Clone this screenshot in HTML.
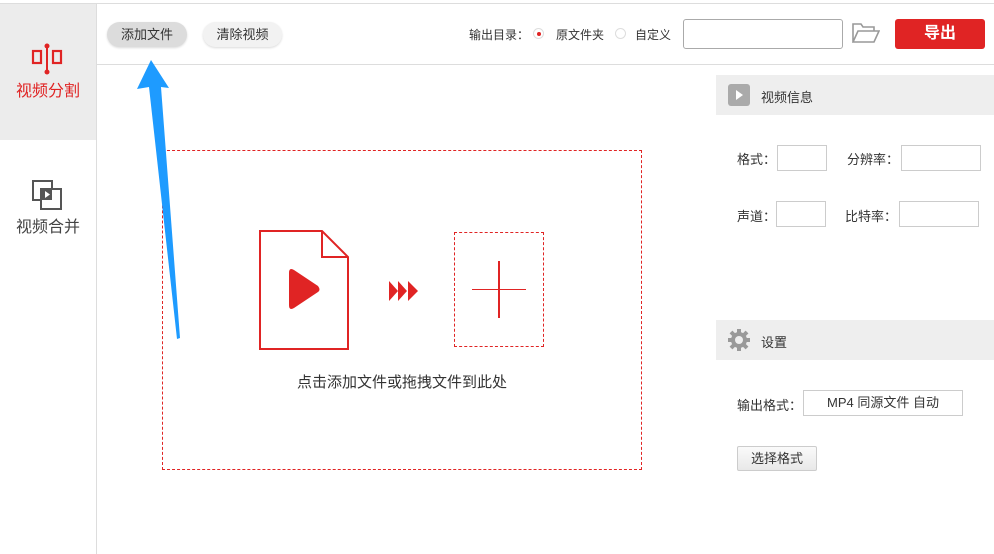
<!DOCTYPE html>
<html><head><meta charset="utf-8"><style>
*{margin:0;padding:0;box-sizing:border-box}
body{width:994px;height:554px;position:relative;background:#fff;font-family:"Liberation Sans","Noto Sans CJK SC",sans-serif;font-size:13px;color:#333;overflow:hidden}
.a{position:absolute}
.btn{position:absolute;top:22px;height:25px;border-radius:13px;font-size:13px;line-height:25px;text-align:center;box-shadow:0 1px 2px rgba(0,0,0,.15)}
.inp{position:absolute;border:1px solid #ccc;background:#fff}
</style></head><body>
<div class="a" style="left:0;top:3px;width:994px;height:1px;background:#ddd"></div>
<div class="a" style="left:96px;top:4px;width:1px;height:550px;background:#ddd"></div>
<div class="a" style="left:0;top:4px;width:96px;height:136px;background:#ececec"></div>
<svg class="a" style="left:30px;top:43px" width="34" height="32" viewBox="0 0 34 32"><rect x="3" y="8" width="8" height="12" fill="none" stroke="#e02424" stroke-width="2.2"/><rect x="23" y="8" width="8" height="12" fill="none" stroke="#e02424" stroke-width="2.2"/><line x1="17" y1="3" x2="17" y2="29" stroke="#e02424" stroke-width="2"/><circle cx="17" cy="3" r="2.5" fill="#e02424"/><circle cx="17" cy="29" r="2.5" fill="#e02424"/></svg>
<div class="a" style="left:0;top:77px;width:96px;text-align:center;font-size:16px;color:#e02424">视频分割</div>
<svg class="a" style="left:31px;top:180px" width="34" height="32" viewBox="0 0 34 32"><rect x="2" y="1" width="19" height="19" fill="none" stroke="#555" stroke-width="2"/><rect x="10" y="9" width="20" height="20" fill="#fff" stroke="#555" stroke-width="2"/><rect x="10" y="9" width="11" height="11" fill="#555"/><path d="M14 11 L19 14.5 L14 18Z" fill="#fff"/></svg>
<div class="a" style="left:0;top:213px;width:96px;text-align:center;font-size:16px;color:#444">视频合并</div>
<div class="btn" style="left:107px;width:80px;background:#dcdcdc">添加文件</div>
<div class="btn" style="left:203px;width:79px;background:#f2f2f2">清除视频</div>
<div class="a" style="left:97px;top:64px;width:897px;height:1px;background:#ddd"></div>
<div class="a" style="left:469px;top:26px;font-size:12px">输出目录：</div>
<div class="a" style="left:533px;top:28px;width:11px;height:11px;border:1px solid #ddd;border-radius:50%"><div class="a" style="left:3px;top:3px;width:4px;height:4px;border-radius:50%;background:#e02424"></div></div>
<div class="a" style="left:556px;top:26px;font-size:12px">原文件夹</div>
<div class="a" style="left:615px;top:28px;width:11px;height:11px;border:1px solid #ddd;border-radius:50%"></div>
<div class="a" style="left:635px;top:26px;font-size:12px">自定义</div>
<div class="inp" style="left:683px;top:19px;width:160px;height:30px;border-color:#aaa;border-radius:3px"></div>
<svg class="a" style="left:852px;top:22px" width="28" height="22" viewBox="0 0 28 22"><path d="M1 20 V2 H9 L11 5 H22 V9 M1 20 L6 9 H27 L22 20 Z" fill="none" stroke="#999" stroke-width="1.6"/></svg>
<div class="a" style="left:895px;top:19px;width:90px;height:30px;background:#e02424;border-radius:3px;color:#fff;font-size:16px;font-weight:bold;text-align:center;line-height:30px">导出</div>
<div class="a" style="left:162px;top:150px;width:480px;height:320px;border:1px dashed #e02424"></div>
<svg class="a" style="left:258px;top:229px" width="92" height="122" viewBox="0 0 92 122"><path d="M2 2 H64 L90 28 V120 H2 Z M64 2 V28 H90" fill="none" stroke="#e02424" stroke-width="2"/><path d="M31 44 Q31 38 36 41 L60 57 Q63 61 60 63 L36 79 Q31 82 31 76Z" fill="#e02424"/></svg>
<svg class="a" style="left:388px;top:279px" width="32" height="24" viewBox="0 0 32 24"><path d="M1 2 L10 12 L1 22Z M10 2 L19 12 L10 22Z M20 2 L30 12 L20 22Z" fill="#e02424"/></svg>
<div class="a" style="left:454px;top:232px;width:90px;height:115px;border:1px dashed #e02424"></div>
<div class="a" style="left:472px;top:289px;width:54px;height:1px;background:#e02424"></div>
<div class="a" style="left:498px;top:261px;width:2px;height:57px;background:#e02424"></div>
<div class="a" style="left:162px;top:371px;width:480px;text-align:center;font-size:15px;color:#333">点击添加文件或拖拽文件到此处</div>
<svg class="a" style="left:130px;top:55px" width="60" height="290" viewBox="0 0 60 290"><path d="M21 5 L39 33 L31 32 L50 283 L47 284 L19 32 L7 34 Z" fill="#1e9bff"/></svg>
<div class="a" style="left:716px;top:75px;width:278px;height:40px;background:#eee"></div>
<div class="a" style="left:728px;top:84px;width:22px;height:22px;background:#aaa;border-radius:3px"></div>
<svg class="a" style="left:728px;top:84px" width="22" height="22"><path d="M8 6 L15 11 L8 16Z" fill="#fff"/></svg>
<div class="a" style="left:761px;top:87px;font-size:13px">视频信息</div>
<div class="a" style="left:737px;top:149px">格式：</div>
<div class="inp" style="left:777px;top:145px;width:50px;height:26px"></div>
<div class="a" style="left:847px;top:149px">分辨率：</div>
<div class="inp" style="left:901px;top:145px;width:80px;height:26px"></div>
<div class="a" style="left:737px;top:206px">声道：</div>
<div class="inp" style="left:776px;top:201px;width:50px;height:26px"></div>
<div class="a" style="left:845px;top:206px">比特率：</div>
<div class="inp" style="left:899px;top:201px;width:80px;height:26px"></div>
<div class="a" style="left:716px;top:320px;width:278px;height:40px;background:#eee"></div>
<svg class="a" style="left:727px;top:328px" width="24" height="24" viewBox="0 0 24 24"><circle cx="12" cy="12" r="8" fill="#999"/><g stroke="#999" stroke-width="4"><line x1="12" y1="1" x2="12" y2="23"/><line x1="1" y1="12" x2="23" y2="12"/><line x1="4" y1="4" x2="20" y2="20"/><line x1="20" y1="4" x2="4" y2="20"/></g><circle cx="12" cy="12" r="4" fill="#eee"/></svg>
<div class="a" style="left:761px;top:332px;font-size:13px">设置</div>
<div class="a" style="left:737px;top:395px">输出格式：</div>
<div class="inp" style="left:803px;top:390px;width:160px;height:26px;text-align:center;line-height:24px">MP4 同源文件 自动</div>
<div class="a" style="left:737px;top:446px;width:80px;height:25px;border:1px solid #ccc;border-radius:2px;background:linear-gradient(#fafafa,#e8e8e8);text-align:center;line-height:23px">选择格式</div>
</body></html>
